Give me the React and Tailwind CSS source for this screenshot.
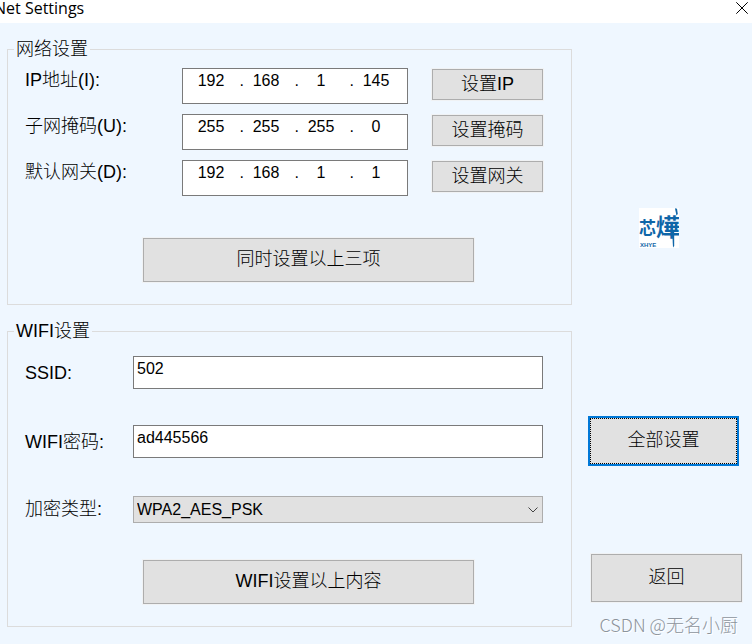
import { useState } from "react";

const ADDRESSES = [
  { id: "ip", label: "IP地址(I):", action: "设置IP", parts: ["192", "168", "1", "145"] },
  { id: "mask", label: "子网掩码(U):", action: "设置掩码", parts: ["255", "255", "255", "0"] },
  { id: "gateway", label: "默认网关(D):", action: "设置网关", parts: ["192", "168", "1", "1"] },
];

const buttonBase =
  "border border-[#adadad] bg-[#e1e1e1] pb-0.5 ring-1 ring-[#f0f2f4] hover:bg-[#e5f1fb]";
const fieldBase = "w-full border border-[#7a7a7a] bg-white outline-none";

function AddressRow({ id, label, action, parts }) {
  const [values, setValues] = useState(parts);

  const update = (index, value) =>
    setValues(values.map((v, i) => (i === index ? value : v)));

  return (
    <div className="flex items-start">
      <label htmlFor={`${id}-0`} className="w-[157px] shrink-0 leading-6">
        {label}
      </label>
      <div className="flex h-9 min-w-0 flex-1 border border-[#7a7a7a] bg-white pl-1.5 text-base">
        {values.map((value, i) => (
          <div key={i} className="flex h-6 leading-6">
            <input
              id={`${id}-${i}`}
              aria-label={`${label} ${i + 1}`}
              className="w-11 bg-transparent text-center outline-none"
              maxLength={3}
              value={value}
              onChange={(e) => update(i, e.target.value)}
            />
            {i < 3 && <span className="w-[11px] text-right">.</span>}
          </div>
        ))}
      </div>
      <button type="button" className={`${buttonBase} mt-px ml-6 h-[31px] w-[111px] shrink-0`}>
        {action}
      </button>
    </div>
  );
}

function FormRow({ id, label, children }) {
  return (
    <div className="flex items-center">
      <label htmlFor={id} className="w-[108px] shrink-0 leading-6">
        {label}
      </label>
      <div className="min-w-0 flex-1">{children}</div>
    </div>
  );
}

function Group({ title, children }) {
  return (
    <fieldset className="min-w-0 border border-[#dcdcdc] pr-7 pb-[22px] pl-[17px]">
      <legend className="-ml-[11px] px-0.5 leading-6">{title}</legend>
      {children}
    </fieldset>
  );
}

function Logo() {
  return (
    <svg
      viewBox="0 0 40 40"
      className="mt-[185px] ml-[51px] size-10 bg-white font-['Noto_Sans_CJK_SC',sans-serif] font-bold"
      fill="#0f66a8"
      role="img"
      aria-label="芯烨"
    >
      <text x="0" y="26" fontSize="17">芯</text>
      <text x="17" y="28" fontSize="24">燁</text>
      <path d="M33.2 24 L35.2 24 L35.2 38 L34 39.4 Z" />
      <path d="M36 0.3 L38 0.8 L38.8 6 L37.4 7.4 Z" />
      <text x="1" y="39" fontSize="6" className="font-['Liberation_Sans',sans-serif]">
        XHYE
      </text>
    </svg>
  );
}

export default function App() {
  const [ssid, setSsid] = useState("502");
  const [password, setPassword] = useState("ad445566");

  return (
    <div className="min-h-screen overflow-hidden bg-[#eff7ff] font-['Liberation_Sans','Noto_Sans_CJK_SC',sans-serif] text-lg font-light text-black">
      <header className="flex h-[23px] items-start justify-between bg-white pr-0.5">
        <h1 className="-ml-1.5 font-['Open_Sans',sans-serif] text-base leading-4 font-normal">
          Net Settings
        </h1>
        <button type="button" aria-label="关闭" className="p-0.5">
          <svg viewBox="0 0 12 12" className="size-3" stroke="#000" fill="none">
            <path d="M0.3 0.3 L11.7 11.7 M11.7 0.3 L0.3 11.7" />
          </svg>
        </button>
      </header>

      <main className="flex gap-4 pr-2.5 pl-[7px]">
        <div className="flex min-w-0 flex-1 flex-col gap-3.5 pt-3.5">
          <Group title="网络设置">
            <div className="flex flex-col gap-2.5 pt-[7px]">
              {ADDRESSES.map((row) => (
                <AddressRow key={row.id} {...row} />
              ))}
            </div>
            <div className="mt-[42px] flex pr-[69px] pl-[118px]">
              <button type="button" className={`${buttonBase} h-11 flex-1`}>
                同时设置以上三项
              </button>
            </div>
          </Group>

          <Group title="WIFI设置">
            <div className="flex flex-col gap-9 pt-[13px]">
              <FormRow id="ssid" label="SSID:">
                <input
                  id="ssid"
                  className={`${fieldBase} block h-[33px] px-[3px] pb-2 text-base`}
                  value={ssid}
                  onChange={(e) => setSsid(e.target.value)}
                />
              </FormRow>
              <FormRow id="password" label="WIFI密码:">
                <input
                  id="password"
                  className={`${fieldBase} block h-[33px] px-[3px] pb-2 text-base`}
                  value={password}
                  onChange={(e) => setPassword(e.target.value)}
                />
              </FormRow>
              <FormRow id="encryption" label="加密类型:">
                <div className="relative mt-0.5">
                  <select
                    id="encryption"
                    className="block h-[27px] w-full appearance-none border border-[#adadad] bg-[#e1e1e1] px-[3px] text-base"
                    defaultValue="WPA2_AES_PSK"
                  >
                    <option>WPA2_AES_PSK</option>
                    <option>WPA_TKIP_PSK</option>
                  </select>
                  <svg
                    viewBox="0 0 10 6"
                    className="pointer-events-none absolute top-[11px] right-[5px] h-1.5 w-2.5"
                    fill="none"
                    stroke="#444"
                  >
                    <path d="M0.5 0.5 L5 5 L9.5 0.5" />
                  </svg>
                </div>
              </FormRow>
            </div>
            <div className="mt-[37px] flex pr-[69px] pl-[118px]">
              <button type="button" className={`${buttonBase} h-11 flex-1`}>
                WIFI设置以上内容
              </button>
            </div>
          </Group>
        </div>

        <aside className="flex w-[154px] shrink-0 flex-col">
          <Logo />
          <button
            type="button"
            className="mt-[168px] h-[50px] w-[151px] border-2 border-[#0078d7] bg-[#e1e1e1]"
          >
            <span className="flex h-full items-center justify-center border border-dotted border-black pb-0.5">
              全部设置
            </span>
          </button>
          <button type="button" className={`${buttonBase} mt-[88px] h-12 w-[151px] self-end`}>
            返回
          </button>
          <p className="mt-2.5 pr-1 text-right font-['Noto_Sans_CJK_SC',sans-serif] leading-6 whitespace-nowrap text-[#8d949c] text-shadow-[1px_1px_0_#fff]">
            CSDN @无名小厨
          </p>
        </aside>
      </main>
    </div>
  );
}
